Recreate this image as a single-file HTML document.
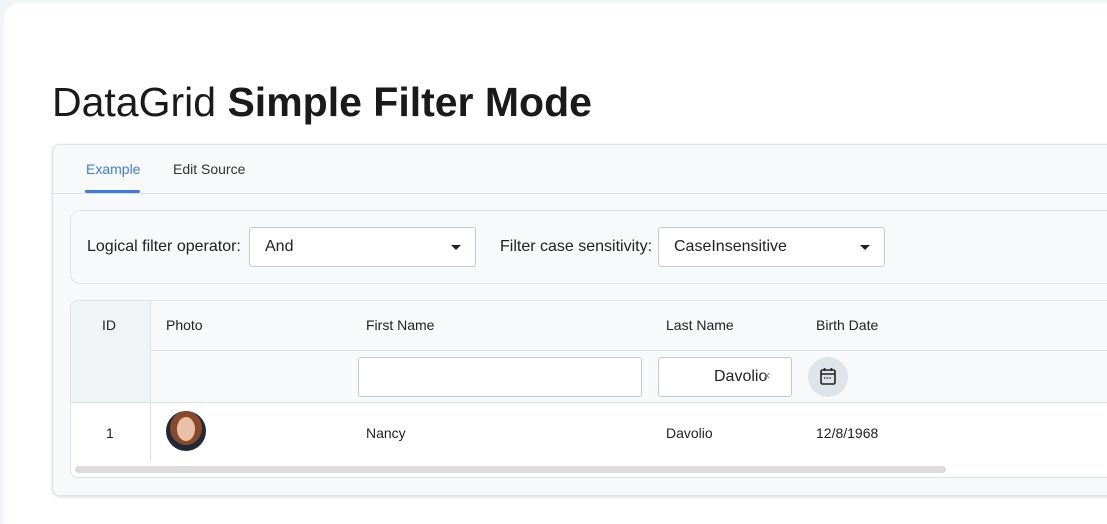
<!DOCTYPE html>
<html style="overflow:hidden;height:524px"><head><style>
body{margin:0;width:1107px;height:524px;background:#f1f4f8;overflow:hidden;position:relative;font-family:"Liberation Sans",sans-serif;color:#222}
.page{position:absolute;left:4px;top:3px;width:1103px;height:521px;background:#fff;border-radius:16px 0 0 0}
h1{position:absolute;left:52px;top:78px;margin:0;font-size:41px;font-weight:400;letter-spacing:0;color:#1a1a1a;line-height:48px}
h1 b{font-weight:700}
.card{position:absolute;left:52px;top:144px;width:1100px;height:350px;background:#f8f9fb;border:1px solid #dde2ea;border-radius:8px;box-shadow:0 1px 3px rgba(0,0,0,.15)}
.tabs{position:absolute;left:0;top:0;right:0;height:48px;border-bottom:1px solid #dde2ea}
.tab{position:absolute;top:16px;font-size:14px;color:#333}
.ul{position:absolute;left:32px;top:45px;width:55px;height:3px;background:#3b7ce6;border-radius:2px}
.fbox{position:absolute;left:17px;top:65px;width:1100px;height:72px;border:1px solid #dde2ea;border-radius:10px;background:#f8f9fb}
.lbl{position:absolute;font-size:16px;color:#222;top:27px}
.sel{position:absolute;top:16px;height:38px;border:1px solid #c6cad1;border-radius:3px;background:#fff;font-size:16px}
.sel span{position:absolute;left:15px;top:10px}
.sel i{position:absolute;right:14px;top:17px;border-left:5px solid transparent;border-right:5px solid transparent;border-top:5px solid #222}
.grid{position:absolute;left:17px;top:155px;width:1100px;height:176px;border:1px solid #dde2ea;border-radius:8px;background:#fff;overflow:hidden}
.hd{position:absolute;left:0;top:0;right:0;height:49px;background:#f8f9fb;border-bottom:1px solid #dde2ea}
.fr{position:absolute;left:0;top:50px;right:0;height:51px;background:#f8f9fb;border-bottom:1px solid #dde2ea}
.idc{position:absolute;left:0;top:0;width:79px;height:101px;background:#f1f4f7;border-right:1px solid #dde2ea}
.t{position:absolute;font-size:14px;color:#222}
.in{position:absolute;top:6px;height:38px;border:1px solid #c6cad1;border-radius:3px;background:#fff}
.cal{position:absolute;left:737px;top:6px;width:40px;height:40px;border-radius:50%;background:#dfe4eb}
.sb{position:absolute;left:4px;top:165px;width:871px;height:7px;background:#dcdcdc;border-radius:4px}
</style></head><body>
<div class="page"></div>
<h1>DataGrid <b>Simple Filter Mode</b></h1>
<div class="card">
 <div class="tabs">
  <div class="tab" style="left:33px;color:#3b7ce6">Example</div>
  <div class="tab" style="left:120px">Edit Source</div>
  <div class="ul"></div>
 </div>
 <div class="fbox">
  <div class="lbl" style="left:16px">Logical filter operator:</div>
  <div class="sel" style="left:178px;width:225px"><span>And</span><i></i></div>
  <div class="lbl" style="left:429px">Filter case sensitivity:</div>
  <div class="sel" style="left:587px;width:225px"><span>CaseInsensitive</span><i></i></div>
 </div>
 <div class="grid">
  <div class="hd"></div><div class="fr"></div><div class="idc"></div>
  <div style="position:absolute;left:79px;top:101px;width:1px;height:60px;background:#dde2ea"></div>
  <div class="t" style="left:31px;top:16px">ID</div>
  <div class="t" style="left:95px;top:16px">Photo</div>
  <div class="t" style="left:295px;top:16px">First Name</div>
  <div class="t" style="left:595px;top:16px">Last Name</div>
  <div class="t" style="left:745px;top:16px">Birth Date</div>
  <div class="in" style="left:287px;width:282px;top:56px"></div>
  <div class="in" style="left:587px;width:132px;top:56px"><span style="position:absolute;left:55px;top:10px;font-size:16px">Davolio</span><span style="position:absolute;left:104px;top:10px;font-size:13px;color:#777">×</span></div>
  <div class="cal" style="top:56px"><svg width="40" height="40" viewBox="0 0 40 40"><rect x="13" y="13" width="14" height="14" rx="1.5" fill="none" stroke="#222" stroke-width="1.6"/><line x1="13" y1="17" x2="27" y2="17" stroke="#222" stroke-width="1.6"/><line x1="16.5" y1="11" x2="16.5" y2="14" stroke="#222" stroke-width="1.6"/><line x1="23.5" y1="11" x2="23.5" y2="14" stroke="#222" stroke-width="1.6"/><line x1="16" y1="21" x2="24" y2="21" stroke="#222" stroke-width="1.2" stroke-dasharray="1.5 1.2"/></svg></div>
  <div class="t" style="left:35px;top:124px">1</div>
  <div style="position:absolute;left:95px;top:110px;width:40px;height:40px;border-radius:50%;background:#1e2a3a;overflow:hidden"><div style="position:absolute;left:4px;top:0;width:32px;height:34px;background:#8a4a2a;border-radius:50%"></div><div style="position:absolute;left:11px;top:6px;width:18px;height:24px;background:#e8c2a8;border-radius:50%"></div></div>
  <div class="t" style="left:295px;top:124px">Nancy</div>
  <div class="t" style="left:595px;top:124px">Davolio</div>
  <div class="t" style="left:745px;top:124px">12/8/1968</div>
  <div class="sb"></div>
 </div>
</div>
</body></html>
